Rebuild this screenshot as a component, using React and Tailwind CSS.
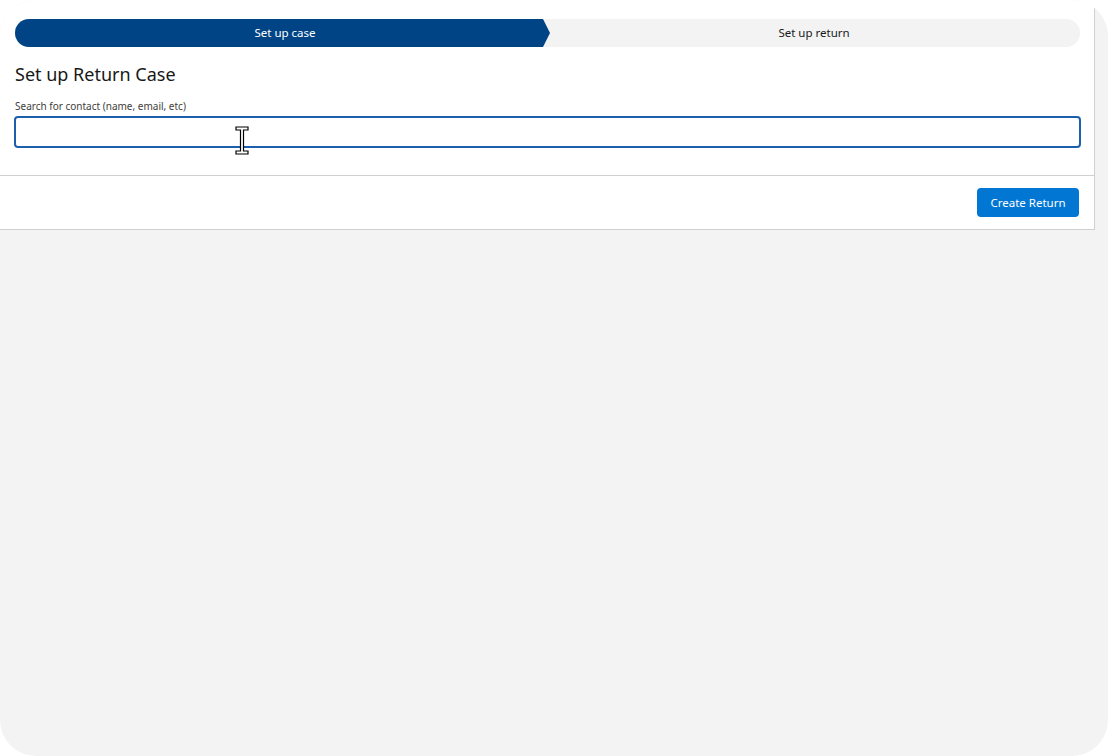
export default function App() {
  return (
    <div className="w-[1108px] h-[756px] bg-white" style={{ fontFamily: '"Noto Sans", "Open Sans", sans-serif' }}>
      <div className="w-full h-full bg-[#f3f3f3] rounded-[36px] overflow-hidden flex flex-col items-start">
        <div className="w-[1095px] bg-white border-r border-b border-[#d0d0d0]">
          <div className="pt-[19px] pl-[15px] pr-[14px]">
            <div className="flex h-[28px] w-full rounded-full overflow-hidden bg-[#f3f3f3]">
              <div className="w-[535px] h-full bg-[#014486] flex items-center justify-center text-white text-[11.5px] [clip-path:polygon(0_0,calc(100%-7px)_0,100%_50%,calc(100%-7px)_100%,0_100%)]">
                <span className="ml-[5px]">Set up case</span>
              </div>
              <div className="flex-1 h-full flex items-center justify-center text-[#181818] text-[11.5px]">
                <span className="-ml-[2px]">Set up return</span>
              </div>
            </div>
            <h1 className="mt-[15px] text-[18px] leading-[24px] text-[#181818]">Set up Return Case</h1>
            <div className="mt-[14px] text-[10px] leading-[12px] text-[#3e3e3c]">Search for contact (name, email, etc)</div>
            <div className="relative mt-[4px] -ml-[1px] h-[32px] w-[1067px] rounded-[4px] border-2 border-[#1b5fad] bg-white">
              <svg className="absolute left-[219px] top-[8px]" width="14" height="29" viewBox="0 0 14 29">
                <path d="M1 1h12v3H8.5v21H13v3H1v-3h4.5V4H1z" fill="#fff" stroke="#000" strokeWidth="1.2" />
              </svg>
            </div>
          </div>
          <div className="mt-[27px] border-t border-[#d0d0d0]"></div>
          <div className="flex justify-end pr-[15px] pt-[12px] pb-[12px]">
            <button className="h-[29px] w-[102px] rounded-[4px] bg-[#0176d3] text-white text-[11.5px]">Create Return</button>
          </div>
        </div>
      </div>
    </div>
  );
}
